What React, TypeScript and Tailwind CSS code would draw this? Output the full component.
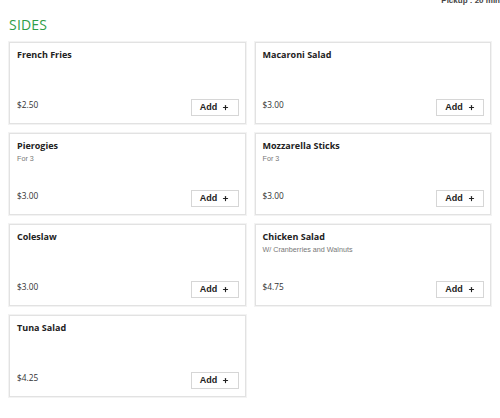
import { Plus } from 'lucide-react';

const items = [
  { name: 'French Fries', desc: '', price: '$2.50' },
  { name: 'Macaroni Salad', desc: '', price: '$3.00' },
  { name: 'Pierogies', desc: 'For 3', price: '$3.00' },
  { name: 'Mozzarella Sticks', desc: 'For 3', price: '$3.00' },
  { name: 'Coleslaw', desc: '', price: '$3.00' },
  { name: 'Chicken Salad', desc: 'W/ Cranberries and Walnuts', price: '$4.75' },
  { name: 'Tuna Salad', desc: '', price: '$4.25' },
];

export default function App() {
  return (
    <div className="w-[500px] h-[418px] bg-white overflow-hidden relative font-['Open_Sans',sans-serif]">
      <div className="absolute right-[0px] top-[-5px] text-[8px] font-bold text-[#444] font-['Liberation_Sans',Arial,sans-serif] whitespace-nowrap">
        Pickup : 20 min
      </div>
      <div className="px-[9px] pt-[16px]">
        <h2 className="text-[14px] leading-[18px] text-[#2e9e48] tracking-[0.2px] mb-[8px]">SIDES</h2>
        <div className="grid grid-cols-2 gap-x-[9px] gap-y-[9px]">
          {items.map((it, i) => (
            <div
              key={i}
              className="h-[82px] border border-[#e2e2e2] shadow-[0_0_0_1px_#f3f3f3] flex flex-col justify-between pl-[7px] pr-[6px] pt-[6px] pb-[7px]"
            >
              <div>
                <div className="text-[9px] leading-[12px] font-bold text-[#222]">{it.name}</div>
                {it.desc && (
                  <div className="mt-[2px] text-[7.2px] leading-[10px] text-[#777] font-['Liberation_Sans',Arial,sans-serif]">{it.desc}</div>
                )}
              </div>
              <div className="flex justify-between items-start">
                <div className="text-[8.3px] leading-[12px] text-[#333]">{it.price}</div>
                <button className="w-[48px] h-[17px] border border-[#d6d6d6] bg-white flex items-center justify-center gap-[5px] text-[9px] font-bold text-[#222] font-['Liberation_Sans',Arial,sans-serif]">
                  Add <Plus size={7} strokeWidth={4} />
                </button>
              </div>
            </div>
          ))}
        </div>
      </div>
    </div>
  );
}
